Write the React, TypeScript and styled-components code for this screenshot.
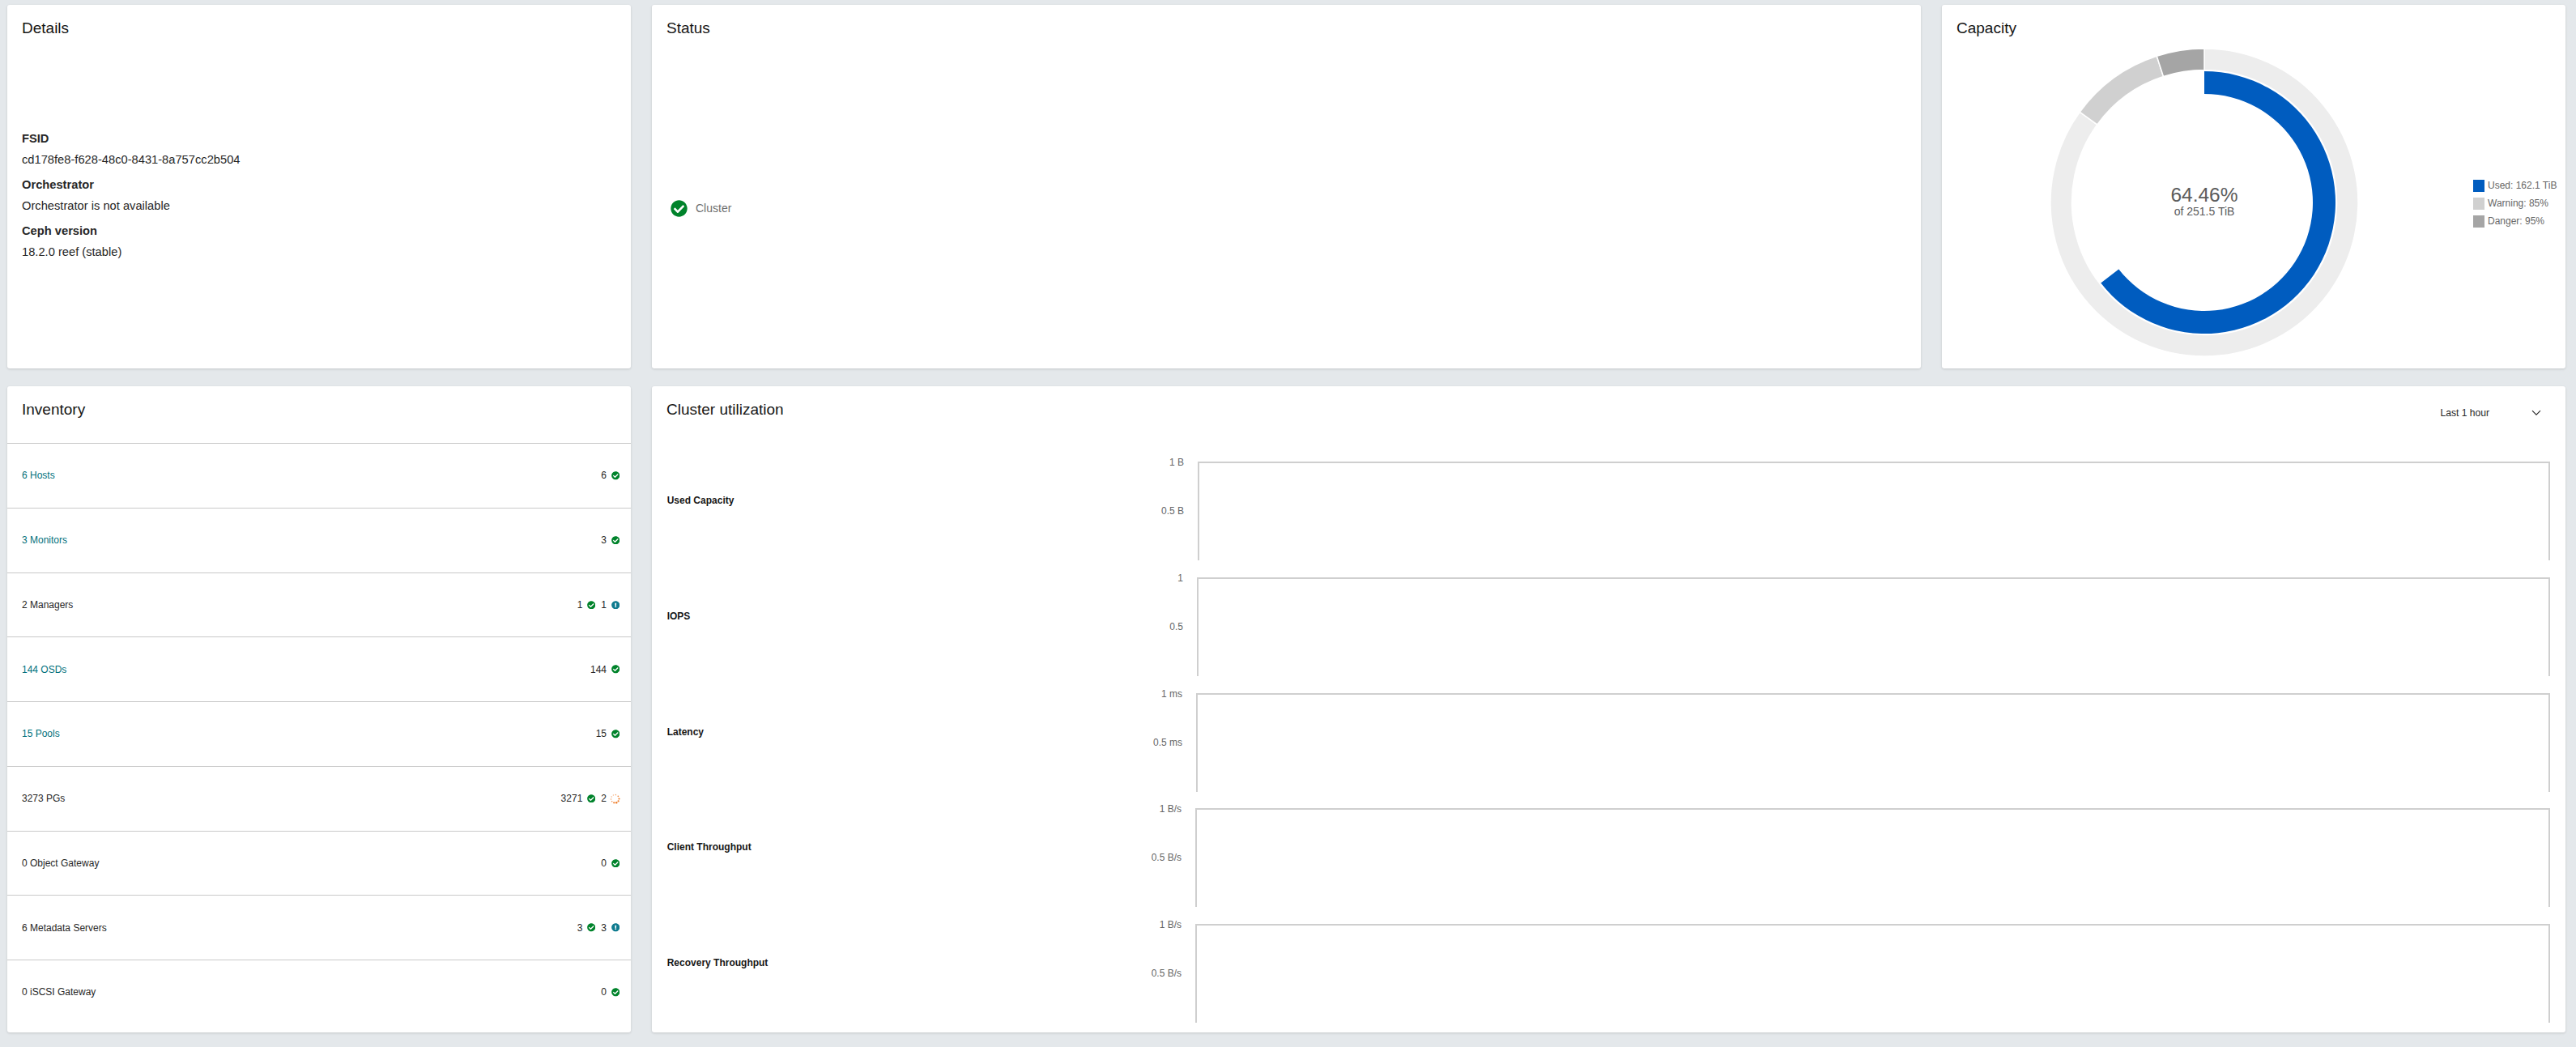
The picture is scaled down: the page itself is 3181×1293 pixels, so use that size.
import React from "react";
import styled, { createGlobalStyle } from "styled-components";
import { FaCheckCircle, FaExclamationCircle } from "react-icons/fa";

const Global = createGlobalStyle`
  html, body { margin: 0; padding: 0; background: #e4e8eb; }
  body { font-family: "Liberation Sans", Arial, sans-serif; color: #262626; }
`;

const Page = styled.div`
  display: grid;
  grid-template-columns: 770px 1567px 770px;
  grid-template-rows: 449px 798px;
  column-gap: 26px;
  row-gap: 22px;
  padding: 6px 13px 18px 9px;
  width: 3181px;
  height: 1293px;
  box-sizing: border-box;
`;

const Card = styled.section<{ $wide?: boolean }>`
  position: relative;
  background: #fff;
  border-radius: 3px;
  box-shadow: 0 1px 3px rgba(0, 0, 0, 0.14);
  display: flex;
  flex-direction: column;
  min-width: 0;
  ${(p) => (p.$wide ? "grid-column: 2 / 4;" : "")}
`;

const CardHead = styled.header`
  display: flex;
  justify-content: space-between;
  align-items: flex-start;
  padding: 18px 18px 0 18px;
  flex: none;
`;

const Title = styled.h2`
  margin: 0;
  font-size: 19px;
  line-height: 22px;
  font-weight: 400;
  color: #161616;
`;

const DetailsBody = styled.dl`
  margin: 0;
  padding: 115px 18px 0;
`;

const Term = styled.dt`
  font-size: 14.7px;
  line-height: 20px;
  font-weight: 700;
  margin-top: 11px;
  &:first-child { margin-top: 0; }
`;

const Value = styled.dd`
  margin: 6px 0 0;
  font-size: 14.7px;
  line-height: 20px;
`;

const StatusBody = styled.div`
  display: flex;
  align-items: center;
  gap: 10px;
  padding: 201px 0 0 23px;
  font-size: 14px;
  line-height: 21px;
  color: #6f6f6f;
`;

const CapacityBody = styled.div`
  display: flex;
  align-items: center;
  padding: 14px 0 0 134px;
`;

const DonutBox = styled.div`
  position: relative;
  width: 380px;
  height: 380px;
  flex: none;
`;

const DonutCenter = styled.div`
  position: absolute;
  inset: 0;
  display: flex;
  flex-direction: column;
  align-items: center;
  justify-content: center;
  padding-bottom: 4px;
  box-sizing: border-box;
  color: #5c5c5c;
`;

const Percent = styled.div`
  font-size: 24.5px;
  line-height: 28px;
`;

const OfTotal = styled.div`
  font-size: 14px;
  line-height: 16px;
  margin-top: -2px;
`;

const Legend = styled.ul`
  list-style: none;
  margin: 2px 0 0 142px;
  padding: 0;
  display: flex;
  flex-direction: column;
  gap: 7px;
`;

const LegendItem = styled.li`
  display: flex;
  align-items: center;
  gap: 4px;
  font-size: 12px;
  line-height: 15px;
  color: #666;
  white-space: nowrap;
`;

const Swatch = styled.span<{ $color: string }>`
  width: 14px;
  height: 15px;
  background: ${(p) => p.$color};
  flex: none;
`;

const InventoryList = styled.ul`
  list-style: none;
  margin: 0;
  padding: 0;
  position: absolute;
  top: 70px;
  left: 0;
  right: 0;
`;

const InventoryRow = styled.li`
  display: flex;
  align-items: center;
  justify-content: space-between;
  height: 79.75px;
  box-sizing: border-box;
  border-top: 1px solid #c9c9c9;
  padding: 0 14px 0 18px;
  font-size: 12px;
`;

const RowLink = styled.a`
  color: #00707c;
  text-decoration: none;
`;

const Counts = styled.div`
  display: flex;
  align-items: center;
  gap: 7px;
`;

const Count = styled.span`
  display: inline-flex;
  align-items: center;
  gap: 5.5px;
`;

const Select = styled.div`
  display: flex;
  align-items: center;
  gap: 52px;
  padding: 7px 12px 0 1px;
  font-size: 12.1px;
  line-height: 16px;
  color: #262626;
`;

const Charts = styled.div`
  display: flex;
  flex-direction: column;
  padding: 52px 19px 0 18.7px;
`;

const ChartRow = styled.div`
  display: flex;
  height: 142.8px;
`;

const MetricName = styled.div`
  flex: 1;
  font-size: 12px;
  line-height: 14px;
  font-weight: 700;
  padding-top: 41px;
  color: #161616;
`;

const Axis = styled.div`
  display: flex;
  flex-direction: column;
  align-items: flex-end;
  margin-right: 17px;
  margin-top: -6px;
`;

const Tick = styled.span`
  font-size: 12px;
  line-height: 14px;
  height: 60px;
  color: #666;
  white-space: nowrap;
`;

const Plot = styled.div<{ $width: number }>`
  width: ${(p) => p.$width}px;
  height: 122px;
  flex: none;
  box-sizing: border-box;
  border: 2px solid #cfcfcf;
  border-bottom: 0;
`;

const CheckIcon = styled(FaCheckCircle)<{ $size?: number }>`
  color: #00832b;
  width: ${(p) => p.$size ?? 10.5}px;
  height: ${(p) => p.$size ?? 10.5}px;
  flex: none;
`;

const InfoIcon = styled(FaExclamationCircle)`
  color: #0f7b8f;
  width: 10.5px;
  height: 10.5px;
  flex: none;
`;

const LoadingSvg = styled.svg`
  width: 13px;
  height: 13px;
  margin: 0 -1.25px;
  flex: none;
`;

function polar(cx: number, cy: number, r: number, deg: number) {
  const a = ((deg - 90) * Math.PI) / 180;
  return [cx + r * Math.cos(a), cy + r * Math.sin(a)];
}

function arc(r0: number, r1: number, from: number, to: number) {
  const c = 190;
  const [ax, ay] = polar(c, c, r1, from);
  const [bx, by] = polar(c, c, r1, to);
  const [dx, dy] = polar(c, c, r0, to);
  const [ex, ey] = polar(c, c, r0, from);
  const large = to - from > 180 ? 1 : 0;
  return `M${ax} ${ay}A${r1} ${r1} 0 ${large} 1 ${bx} ${by}L${dx} ${dy}A${r0} ${r0} 0 ${large} 0 ${ex} ${ey}Z`;
}

const Donut = () => (
  <svg width="380" height="380" viewBox="0 0 380 380">
    <g stroke="#fff" strokeWidth="1.5">
      <path d={arc(163.5, 190, 0, 306)} fill="#ededed" />
      <path d={arc(163.5, 190, 306, 342)} fill="#d0d0d0" />
      <path d={arc(163.5, 190, 342, 360)} fill="#a5a5a5" />
    </g>
    <path d={arc(134, 162, 0, 232.06)} fill="#005cbf" />
  </svg>
);

const dots = [
  [90, 1.1, 1],
  [125, 1.1, 1],
  [160, 1.25, 1],
  [195, 1.1, 1],
  [230, 0.8, 0.85],
  [265, 0.75, 0.75],
  [300, 0.7, 0.65],
  [335, 0.7, 0.6],
  [10, 0.8, 0.7],
  [50, 0.9, 0.85],
];

const Loading = () => (
  <LoadingSvg viewBox="0 0 13 13">
    {dots.map(([deg, r, o]) => {
      const [x, y] = polar(6.5, 6.5, 5, deg);
      return <circle key={deg} cx={x} cy={y} r={r} fill="#ee7d2a" opacity={o} />;
    })}
  </LoadingSvg>
);

type St = "ok" | "info" | "load";
const inventory: { label: string; link?: boolean; counts: [number, St][] }[] = [
  { label: "6 Hosts", link: true, counts: [[6, "ok"]] },
  { label: "3 Monitors", link: true, counts: [[3, "ok"]] },
  { label: "2 Managers", counts: [[1, "ok"], [1, "info"]] },
  { label: "144 OSDs", link: true, counts: [[144, "ok"]] },
  { label: "15 Pools", link: true, counts: [[15, "ok"]] },
  { label: "3273 PGs", counts: [[3271, "ok"], [2, "load"]] },
  { label: "0 Object Gateway", counts: [[0, "ok"]] },
  { label: "6 Metadata Servers", counts: [[3, "ok"], [3, "info"]] },
  { label: "0 iSCSI Gateway", counts: [[0, "ok"]] },
];

const metrics = [
  { name: "Used Capacity", unit: " B", width: 1670 },
  { name: "IOPS", unit: "", width: 1671 },
  { name: "Latency", unit: " ms", width: 1672 },
  { name: "Client Throughput", unit: " B/s", width: 1673 },
  { name: "Recovery Throughput", unit: " B/s", width: 1673 },
];

const icons = { ok: <CheckIcon />, info: <InfoIcon />, load: <Loading /> };

export default function App() {
  return (
    <>
      <Global />
      <Page>
        <Card>
          <CardHead><Title>Details</Title></CardHead>
          <DetailsBody>
            <Term>FSID</Term>
            <Value>cd178fe8-f628-48c0-8431-8a757cc2b504</Value>
            <Term>Orchestrator</Term>
            <Value>Orchestrator is not available</Value>
            <Term>Ceph version</Term>
            <Value>18.2.0 reef (stable)</Value>
          </DetailsBody>
        </Card>
        <Card>
          <CardHead><Title>Status</Title></CardHead>
          <StatusBody>
            <CheckIcon $size={21} />
            Cluster
          </StatusBody>
        </Card>
        <Card>
          <CardHead><Title>Capacity</Title></CardHead>
          <CapacityBody>
            <DonutBox>
              <Donut />
              <DonutCenter>
                <Percent>64.46%</Percent>
                <OfTotal>of 251.5 TiB</OfTotal>
              </DonutCenter>
            </DonutBox>
            <Legend>
              <LegendItem><Swatch $color="#005cbf" />Used: 162.1 TiB</LegendItem>
              <LegendItem><Swatch $color="#d0d0d0" />Warning: 85%</LegendItem>
              <LegendItem><Swatch $color="#a5a5a5" />Danger: 95%</LegendItem>
            </Legend>
          </CapacityBody>
        </Card>
        <Card>
          <CardHead><Title>Inventory</Title></CardHead>
          <InventoryList>
            {inventory.map((r) => (
              <InventoryRow key={r.label}>
                {r.link ? <RowLink href="#">{r.label}</RowLink> : <span>{r.label}</span>}
                <Counts>
                  {r.counts.map(([n, s], i) => (
                    <Count key={i}>{n}{icons[s]}</Count>
                  ))}
                </Counts>
              </InventoryRow>
            ))}
          </InventoryList>
        </Card>
        <Card $wide>
          <CardHead>
            <Title>Cluster utilization</Title>
            <Select>
              Last 1 hour
              <svg width="12" height="8" viewBox="0 0 12 8" fill="none" stroke="#262626" strokeWidth="1.1">
                <path d="M1 1.2l5 5 5-5" />
              </svg>
            </Select>
          </CardHead>
          <Charts>
            {metrics.map((m) => (
              <ChartRow key={m.name}>
                <MetricName>{m.name}</MetricName>
                <Axis>
                  <Tick>{"1" + m.unit}</Tick>
                  <Tick>{"0.5" + m.unit}</Tick>
                </Axis>
                <Plot $width={m.width} />
              </ChartRow>
            ))}
          </Charts>
        </Card>
      </Page>
    </>
  );
}
